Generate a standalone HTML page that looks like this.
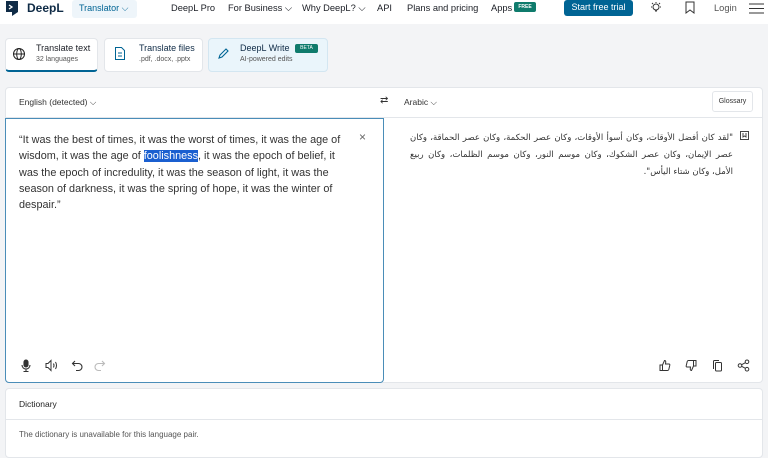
<!DOCTYPE html>
<html><head><meta charset="utf-8"><style>
*{box-sizing:border-box;margin:0;padding:0}
body{width:768px;height:450px;overflow:hidden;background:#f3f4f6;font-family:"Liberation Sans",sans-serif;color:#1b1e25;position:relative}
.a{position:absolute}
.hdr{left:0;top:0;width:768px;height:24px;background:#fff}
.nav{font-size:9.3px;color:#1b1e25;top:3px}
.card{background:#fff;border:1px solid #e3e6ea;border-radius:4px}
svg{position:absolute}
.ar div{text-align:justify;text-align-last:justify;white-space:nowrap}
.ar div.l{text-align-last:right}
</style></head><body>
<div class="a hdr"></div>
<svg style="left:4px;top:0" width="16" height="17" viewBox="0 0 16 17"><path d="M2 1h12v11l-6 4v-4H2z" fill="#0f2b46"/><path d="M5 5l3 2-3 2" stroke="#fff" stroke-width="1.3" fill="none"/></svg>
<div class="a" style="left:27px;top:1px;font-size:12px;font-weight:bold;color:#0f2b46">DeepL</div>
<div class="a" style="left:72px;top:0;width:65px;height:18px;background:#eef5fa;border-radius:3px;font-size:9px;color:#006494;padding:3px 0 0 7px">Translator ⌵</div>
<div class="a nav" style="left:171px">DeepL Pro</div>
<div class="a nav" style="left:228px">For Business ⌵</div>
<div class="a nav" style="left:302px">Why DeepL? ⌵</div>
<div class="a nav" style="left:377px">API</div>
<div class="a nav" style="left:407px">Plans and pricing</div>
<div class="a nav" style="left:491px">Apps</div>
<div class="a" style="left:514px;top:2px;width:22px;height:10px;background:#0f7b6c;border-radius:2px;color:#fff;font-size:5px;font-weight:bold;text-align:center;line-height:10px">FREE</div>
<div class="a" style="left:564px;top:0;width:69px;height:16px;background:#006494;border-radius:3px;color:#fff;font-size:9px;text-align:center;line-height:15px">Start free trial</div>
<svg style="left:649px;top:1px" width="14" height="14" viewBox="0 0 14 14" fill="none" stroke="#333" stroke-width="1"><circle cx="7" cy="6" r="3"/><path d="M6 10h2M7 1v1M2 6h1M11 6h1M3 2l1 1M11 2l-1 1"/></svg>
<svg style="left:684px;top:1px" width="12" height="14" viewBox="0 0 12 14" fill="none" stroke="#333" stroke-width="1"><path d="M2 1h8v11l-4-3-4 3z"/></svg>
<div class="a nav" style="left:714px;color:#555">Login</div>
<svg style="left:749px;top:3px" width="15" height="11"><path d="M0 1h15M0 5.5h15M0 10h15" stroke="#333"/></svg>

<div class="a card" style="left:5px;top:38px;width:93px;height:34px;border-bottom:2px solid #006494"></div>
<svg style="left:12px;top:47px" width="14" height="14" viewBox="0 0 14 14" fill="none" stroke="#222" stroke-width="1"><circle cx="7" cy="7" r="5.5"/><ellipse cx="7" cy="7" rx="2.3" ry="5.5"/><path d="M1.5 7h11"/></svg>
<div class="a" style="left:36px;top:43px;font-size:9px">Translate text</div>
<div class="a" style="left:36px;top:56px;font-size:7px;color:#555">32 languages</div>
<div class="a card" style="left:104px;top:38px;width:99px;height:34px"></div>
<svg style="left:114px;top:46px" width="12" height="15" fill="none" stroke="#006494"><path d="M1.5 1.5h6l3 3v9h-9z M4 7h4M4 10h4"/></svg>
<div class="a" style="left:139px;top:43px;font-size:9px;color:#0f2b46">Translate files</div>
<div class="a" style="left:139px;top:56px;font-size:7px;color:#555">.pdf, .docx, .pptx</div>
<div class="a" style="left:208px;top:38px;width:120px;height:34px;background:#eaf5fb;border:1px solid #d3e6f1;border-radius:4px"></div>
<svg style="left:217px;top:47px" width="13" height="13" fill="none" stroke="#006494" stroke-width="1.1"><path d="M2 11l1-3 6-6 2 2-6 6z"/></svg>
<div class="a" style="left:240px;top:43px;font-size:9px;color:#0f2b46">DeepL Write</div>
<div class="a" style="left:295px;top:44px;width:23px;height:9px;background:#0f7b6c;border-radius:2px;color:#fff;font-size:5px;text-align:center;line-height:9px">BETA</div>
<div class="a" style="left:240px;top:56px;font-size:7px;color:#555">AI-powered edits</div>

<div class="a card" style="left:5px;top:87px;width:758px;height:296px"></div>
<div class="a" style="left:6px;top:117px;width:756px;height:1px;background:#e3e6ea"></div>
<div class="a" style="left:19px;top:97px;font-size:8.5px;color:#333">English (detected) ⌵</div>
<div class="a" style="left:380px;top:95px;font-size:10px;color:#333">⇄</div>
<div class="a" style="left:404px;top:97px;font-size:8.5px;color:#333">Arabic ⌵</div>
<div class="a" style="left:712px;top:91px;width:41px;height:21px;border:1px solid #e3e6ea;border-radius:3px;font-size:7px;color:#333;text-align:center;line-height:19px">Glossary</div>
<div class="a" style="left:5px;top:118px;width:379px;height:265px;border:1px solid #4a8db8;border-radius:0 0 4px 4px;background:#fff"></div>
<div class="a" style="left:19px;top:132px;font-size:10.85px;line-height:16.3px;color:#333;white-space:nowrap">“It was the best of times, it was the worst of times, it was the age of<br>wisdom, it was the age of <span style="background:#1a5fd0;color:#fff">foolishness</span>, it was the epoch of belief, it<br>was the epoch of incredulity, it was the season of light, it was the<br>season of darkness, it was the spring of hope, it was the winter of<br>despair.”</div>
<div class="a" style="left:359px;top:130px;font-size:12px;color:#666">×</div>
<div class="a ar" style="left:410px;top:130px;width:323px;direction:rtl;font-family:'DejaVu Sans',sans-serif;font-size:8.5px;line-height:17px;color:#333">
<div>"لقد كان أفضل الأوقات، وكان أسوأ الأوقات، وكان عصر الحكمة، وكان عصر الحماقة، وكان</div>
<div>عصر الإيمان، وكان عصر الشكوك، وكان موسم النور، وكان موسم الظلمات، وكان ربيع</div>
<div class="l">الأمل، وكان شتاء اليأس".</div>
</div>
<svg style="left:740px;top:131px" width="9" height="9" fill="none" stroke="#444"><rect x="0.5" y="0.5" width="8" height="8"/><path d="M3 2v4l1.5-1 1.5 1V2"/></svg>
<svg style="left:20px;top:359px" width="12" height="13" fill="none" stroke="#333" stroke-width="1.1"><rect x="4" y="1" width="4" height="7" rx="2" fill="#333"/><path d="M2 6a4 4 0 0 0 8 0M6 10v2M3.5 12.5h5"/></svg>
<svg style="left:44px;top:359px" width="16" height="13" fill="none" stroke="#333" stroke-width="1"><path d="M2 4.5h2l3-3v10l-3-3H2z M9.5 4.5q1 2 0 4 M11.5 3q2 3.5 0 7"/></svg>
<svg style="left:71px;top:359px" width="13" height="13" fill="none" stroke="#333" stroke-width="1.1"><path d="M4 2L1.5 4.5 4 7M1.5 4.5h6a3.5 3.5 0 0 1 0 7H5"/></svg>
<svg style="left:93px;top:359px" width="13" height="13" fill="none" stroke="#bbb" stroke-width="1.1"><path d="M9 2l2.5 2.5L9 7M11.5 4.5h-6a3.5 3.5 0 0 0 0 7H8"/></svg>
<svg style="left:659px;top:359px" width="12" height="13" fill="none" stroke="#333" stroke-width="1"><path d="M1 6h2.5v5.5H1zM3.5 6l2-4.5q1.5 0 1.2 2L6.5 5H10q1 0 .8 1.2l-1 4.3q-.3 1-1.3 1H3.5"/></svg>
<svg style="left:685px;top:359px" width="12" height="13" fill="none" stroke="#333" stroke-width="1"><path d="M11 7H8.5V1.5H11zM8.5 7l-2 4.5q-1.5 0-1.2-2L5.5 8H2q-1 0-.8-1.2l1-4.3q.3-1 1.3-1h5"/></svg>
<svg style="left:712px;top:359px" width="11" height="13" fill="none" stroke="#333" stroke-width="1"><rect x="3.5" y="3.5" width="6" height="8.5" rx="1"/><path d="M1.5 10V2.5q0-1 1-1H7"/></svg>
<svg style="left:737px;top:359px" width="13" height="13" fill="none" stroke="#333" stroke-width="1"><circle cx="3" cy="6.5" r="1.8"/><circle cx="10" cy="2.8" r="1.8"/><circle cx="10" cy="10.2" r="1.8"/><path d="M4.6 5.7l3.8-2M4.6 7.3l3.8 2"/></svg>

<div class="a card" style="left:5px;top:388px;width:758px;height:70px"></div>
<div class="a" style="left:6px;top:419px;width:756px;height:1px;background:#e3e6ea"></div>
<div class="a" style="left:19px;top:399px;font-size:8.5px;color:#222">Dictionary</div>
<div class="a" style="left:19px;top:430px;font-size:8px;color:#555">The dictionary is unavailable for this language pair.</div>
</body></html>
